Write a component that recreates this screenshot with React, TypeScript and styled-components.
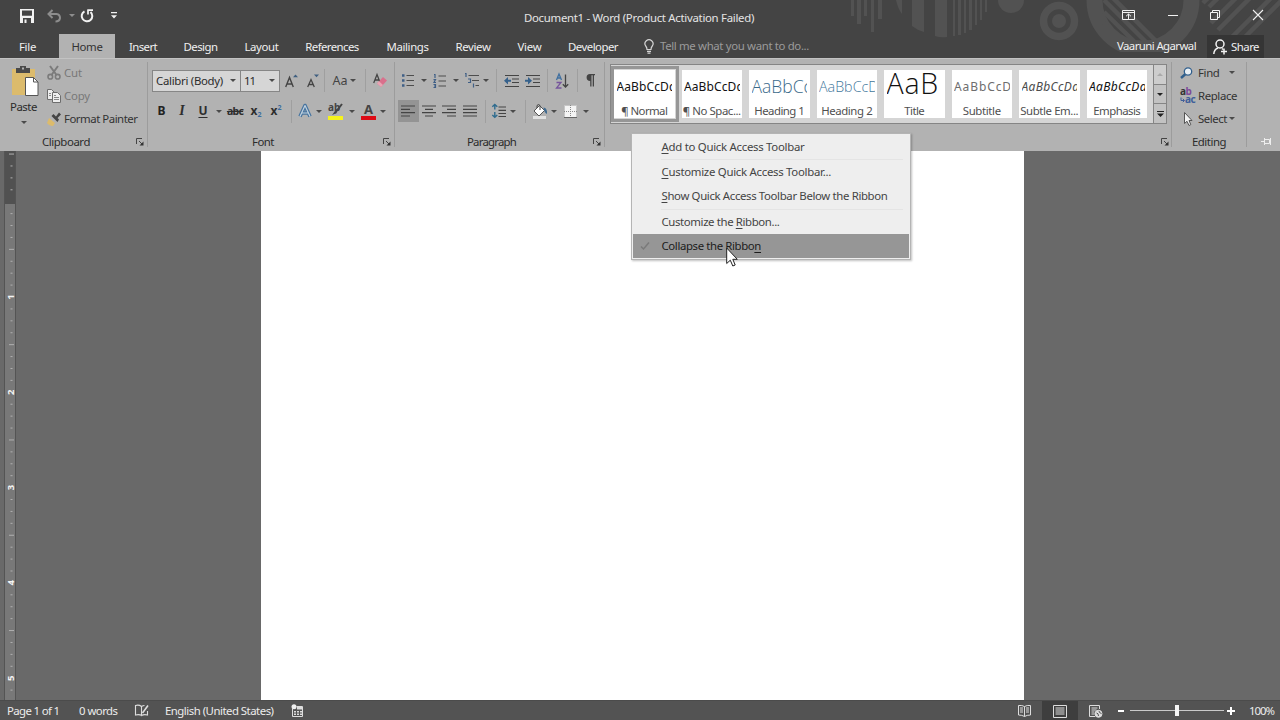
import React, { useLayoutEffect, useRef, useState } from 'react';
import styled, { createGlobalStyle, css } from 'styled-components';

const GlobalStyle = createGlobalStyle`
  * { box-sizing: border-box; }
  body { margin: 0; overflow: hidden; background: #696969; }
  svg { display: block; flex: none; overflow: visible; }
`;

const Window = styled.div`
  width: 1280px;
  height: 720px;
  display: flex;
  flex-direction: column;
  font-family: 'Noto Sans', 'Open Sans', sans-serif;
  font-size: 11.4px;
  line-height: 16px;
  color: #2b2b2b;
  background: #696969;
  cursor: default;
`;

/* ---------- text fitted to a given advance width ---------- */

const FitText = styled.span<{ $w: number }>`
  flex: none;
  width: ${(p) => p.$w}px;
  white-space: nowrap;
`;

function Text({ w, children }: { w: number; children: React.ReactNode }) {
  const inner = useRef<HTMLSpanElement>(null);
  const [spacing, setSpacing] = useState(0);
  useLayoutEffect(() => {
    const el = inner.current;
    if (!el) return;
    const n = (el.textContent || '').length;
    setSpacing((w - el.getBoundingClientRect().width) / n);
  }, [w]);
  return (
    <FitText $w={w}>
      <span ref={inner} style={{ letterSpacing: spacing }}>
        {children}
      </span>
    </FitText>
  );
}

/* ---------- shared pieces ---------- */

const Cell = styled.div<{ $w: number; $start?: boolean }>`
  flex: none;
  width: ${(p) => p.$w}px;
  height: 100%;
  display: flex;
  align-items: center;
  justify-content: ${(p) => (p.$start ? 'flex-start' : 'center')};
`;

const Divider = styled.div`
  flex: none;
  width: 1px;
  height: 23px;
  background: #9f9f9f;
`;

const Caret = styled.i<{ $c?: string }>`
  flex: none;
  width: 0;
  height: 0;
  border: 3px solid transparent;
  border-top-color: ${(p) => p.$c || '#4a4a4a'};
  border-bottom-width: 0;
`;

/* ---------- header ---------- */

const Header = styled.header`
  position: relative;
  flex: none;
  height: 58px;
  background: #444;
  color: #f0f0f0;
`;

const Backdrop = styled.svg`
  position: absolute;
  right: 0;
  top: 0;
`;

const TitleBar = styled.div`
  position: relative;
  display: flex;
  height: 34px;
  padding-top: 1px;
`;

const QuickAccess = styled.div`
  flex: none;
  display: flex;
  width: 524px;
  height: 29px;
  padding-left: 17px;
`;

const Caption = styled.div`
  flex: none;
  height: 33px;
  width: 586px;
  display: flex;
  align-items: center;
  color: #e4e4e4;
`;

const WindowButtons = styled.div`
  display: flex;
  height: 28px;
`;

const TabBar = styled.nav`
  position: relative;
  display: flex;
  height: 24px;
`;

const Tab = styled.div<{ $w: number; $active?: boolean }>`
  flex: none;
  width: ${(p) => p.$w}px;
  display: flex;
  justify-content: center;
  align-items: center;
  padding-top: 1px;
  ${(p) => p.$active && css`background: #b2b2b2; color: #333; margin-left: 4px;`}
`;

const TellMe = styled.div`
  flex: none;
  display: flex;
  align-items: center;
  gap: 6px;
  width: 488px;
  padding-left: 15px;
  color: #9b9b9b;
`;

const ShareButton = styled.div`
  display: flex;
  align-items: center;
  gap: 3px;
  width: 57px;
  height: 23px;
  margin: 1px 0 0 11px;
  padding-left: 6px;
  background: #353535;
`;

const TABS: [string, number, number][] = [
  ['File', 17, 55],
  ['Home', 31, 56],
  ['Insert', 28, 56],
  ['Design', 34, 59],
  ['Layout', 34, 63],
  ['References', 53.5, 78],
  ['Mailings', 42, 73],
  ['Review', 35, 58],
  ['View', 24, 55],
  ['Developer', 50, 72],
];

function HeaderArt() {
  return (
    <Backdrop width="460" height="58" viewBox="820 0 460 58" fill="#525252">
      <clipPath id="art">
        <rect x="820" y="0" width="460" height="52" />
      </clipPath>
      <g clipPath="url(#art)">
        <path d="M851 0h3v16h-3zM857 0h4v24h-4zM864 0h3v16h-3zM871 0h3v32h-3zM878 0h4v19h-4z" />
        <path d="M896 0h6v14q-4-5-6-14z" />
        <path d="M912 0h12v32q-7-2-12-6zM935 0h12v37q-7 1-12-1z" />
        <path d="M953 0h2v36h-2zM958 0h3v35h-3zM964 0h2v33h-2zM969 0h3v30h-3zM975 0h2v25h-2zM980 0h2v20h-2zM985 0h2v12h-2z" />
        <circle cx="1011" cy="0" r="13" />
        <circle cx="1059" cy="21" r="15.5" fill="none" stroke="#525252" strokeWidth="7.5" />
        <circle cx="1059" cy="21" r="7" />
        <circle cx="1143" cy="0" r="48.5" fill="none" stroke="#525252" strokeWidth="16" />
        <g stroke="#525252" strokeWidth="4.5">
          <path d="M1104 23L1132 51M1104 12L1143 50M1104 0L1152 48M1113-2L1159 44" />
          <path d="M1208-2L1203 3M1220-4L1209 7M1238-4L1211 23M1252-4L1218 30M1273-4L1224 45M1284-2L1233 49" />
        </g>
      </g>
    </Backdrop>
  );
}

const LIGHT = '#f2f2f2';

function AppHeader() {
  return (
    <Header>
      <HeaderArt />
      <TitleBar>
        <QuickAccess>
          <Cell $w={20}>
            <svg width="14" height="14" viewBox="0 0 14 14" fill={LIGHT} fillRule="evenodd">
              <path d="M0 0h14v14H0zM2 1.500v5.200h10V1.500zM3 9v5h8V9z" />
              <path d="M4.500 10.500h2v3.500h-2z" />
            </svg>
          </Cell>
          <Cell $w={35}>
            <svg width="15" height="14" viewBox="0 0 15 14" fill="none" stroke="#8d8d8d" strokeWidth="2">
              <path d="M5.500 1L1.500 5L5.500 9M2 5H9.500Q13 5.500 13 9Q12.500 12.500 8.500 12.500" />
            </svg>
          </Cell>
          <Cell $w={0}>
            <Caret $c="#8d8d8d" />
          </Cell>
          <Cell $w={30}>
            <svg width="14" height="14" viewBox="0 0 14 14" fill="none" stroke={LIGHT} strokeWidth="2">
              <path d="M10.500 3A5.300 5.300 0 1 1 4.500 2.300" />
              <path d="M8 0.500V5.500M7.500 1.200H13" strokeWidth="1.700" />
            </svg>
          </Cell>
          <Cell $w={24}>
            <svg width="6" height="7" viewBox="0 0 6 7" fill={LIGHT}>
              <path d="M0 0h6v1.300H0zM0 3.200h6L3 6.500z" />
            </svg>
          </Cell>
        </QuickAccess>
        <Caption>
          <Text w={230}>Document1 - Word (Product Activation Failed)</Text>
        </Caption>
        <WindowButtons>
          <Cell $w={37}>
            <svg width="13" height="10" viewBox="0 0 13 10" fill="none" stroke={LIGHT}>
              <path d="M.5.5h12v9H.5zM.5 2.500h12M6.500 9V4M4 6.300L6.500 4L9 6.300" />
            </svg>
          </Cell>
          <Cell $w={52}>
            <svg width="10" height="1" viewBox="0 0 10 1" fill={LIGHT}>
              <path d="M0 0h10v1H0z" />
            </svg>
          </Cell>
          <Cell $w={32}>
            <svg width="10" height="10" viewBox="0 0 10 10" fill="none" stroke={LIGHT}>
              <path d="M.5 2.500h7v7h-7zM2.500 2.500V.5h7v7h-2" />
            </svg>
          </Cell>
          <Cell $w={5} />
          <Cell $w={44}>
            <svg width="10" height="10" viewBox="0 0 10 10" stroke={LIGHT} strokeWidth="1.100">
              <path d="M0 0L10 10M10 0L0 10" />
            </svg>
          </Cell>
        </WindowButtons>
      </TitleBar>
      <TabBar>
        {TABS.map(([name, w, cell]) => (
          <Tab key={name} $w={cell} $active={name === 'Home'}>
            <Text w={w}>{name}</Text>
          </Tab>
        ))}
        <TellMe>
          <svg width="10" height="15" viewBox="0 0 10 15" fill="none" stroke="#d5d5d5" strokeWidth="1.200">
            <path d="M3 10.500Q3 8.500 1.700 7A4 4 0 1 1 8.300 7Q7 8.500 7 10.500zM3 12.300h4M3.500 14.200h3" />
          </svg>
          <Text w={149}>Tell me what you want to do...</Text>
        </TellMe>
        <Cell $w={79}>
          <Text w={79}>Vaaruni Agarwal</Text>
        </Cell>
        <ShareButton>
          <svg width="15" height="16" viewBox="0 0 15 16" fill="none" stroke={LIGHT} strokeWidth="1.500">
            <circle cx="7" cy="5" r="4" />
            <path d="M.8 15Q1 10.500 5 9M9 9.500L10 10.500M11 9.500v6M8 12.500h6" />
          </svg>
          <Text w={28}>Share</Text>
        </ShareButton>
      </TabBar>
    </Header>
  );
}

/* ---------- ribbon ---------- */

const Ribbon = styled.section`
  flex: none;
  display: flex;
  height: 93px;
  background: #b2b2b2;
  border-top: 1px solid #c3c3c3;
`;

const Group = styled.div<{ $w: number }>`
  flex: none;
  display: flex;
  flex-direction: column;
  width: ${(p) => p.$w}px;
  height: 92px;
  padding-top: 3px;
  background: linear-gradient(#9c9c9c, #9c9c9c) right 3px / 1px 85px no-repeat;
`;

const GroupBody = styled.div`
  display: flex;
  height: 71px;
`;

const GroupFooter = styled.div`
  display: flex;
  height: 18px;
`;

const Tools = styled.div`
  display: flex;
  flex-direction: column;
`;

const ToolRow = styled.div<{ $h: number; $pad: number }>`
  display: flex;
  align-items: center;
  height: ${(p) => p.$h}px;
  padding-left: ${(p) => p.$pad}px;
`;

const Launcher = () => (
  <svg width="8" height="8" viewBox="0 0 8 8" fill="none" stroke="#444">
    <path d="M.5 6V.5H6M3 3L6.500 6.500" />
    <path d="M7.500 3.500v4h-4z" fill="#333" stroke="none" />
  </svg>
);

const PasteButton = styled.div`
  display: flex;
  flex-direction: column;
  align-items: center;
  width: 47px;
  height: 71px;
  padding-top: 4px;
`;

const PasteLabel = styled.div`
  height: 16px;
  margin: 3px 0 6px;
`;

const Command = styled.div<{ $muted?: boolean; $icon: number }>`
  display: flex;
  align-items: center;
  height: 23px;
  color: ${(p) => (p.$muted ? '#787878' : '#333')};
  svg { margin-right: ${(p) => 17 - p.$icon}px; }
`;

const CommandList = styled.div`
  display: flex;
  flex-direction: column;
  margin-top: -1px;
`;

function ClipboardGroup() {
  return (
    <Group $w={148}>
      <GroupBody>
        <PasteButton>
          <svg width="28" height="30" viewBox="-1 0 28 30">
            <rect x="1" y="3" width="23" height="26" fill="#dcbb6c" />
            <path d="M5 2h4V0h6v2h4v5H5z" fill="#4a4a4a" />
            <rect x="11" y="1.500" width="2" height="2" fill="#b2b2b2" />
            <path d="M14.500 11.500h8l4.500 4.500v13.500H14.500z" fill="#fff" stroke="#555" />
            <path d="M22.500 11.500V16H27" fill="none" stroke="#555" />
          </svg>
          <PasteLabel>
            <Text w={27}>Paste</Text>
          </PasteLabel>
          <Caret />
        </PasteButton>
        <CommandList>
          <Command $muted $icon={14}>
            <svg width="14" height="15" viewBox="0 0 14 15" fill="none" stroke="#7b7b7b" strokeWidth="1.600">
              <path d="M3 1L9.500 10M11 1L4.500 10" strokeWidth="2" />
              <circle cx="3.300" cy="11.700" r="2.300" />
              <circle cx="10.700" cy="11.700" r="2.300" />
            </svg>
            <Text w={18}>Cut</Text>
          </Command>
          <Command $muted $icon={14}>
            <svg width="14" height="14" viewBox="0 0 14 14" fill="#eee" stroke="#6d6d6d">
              <path d="M.5.5h4l3 3v7h-7z" />
              <path d="M5.500 3.500h5l3 3v7h-8z" />
              <path d="M7 8.500h5M7 10.500h5M7 6.500h2M2 4.500h2M2 6.500h2" stroke="#888" />
            </svg>
            <Text w={26}>Copy</Text>
          </Command>
          <Command $icon={14}>
            <svg width="14" height="14" viewBox="0 0 14 14">
              <path d="M2 6l6 5l-2 3q-4 0-6-3z" fill="#dcbb6c" />
              <path d="M4.500 4L10.500 10L12 7.500L10.500 6L14 2.500L12 .5L9 4.500L6.500 2z" fill="#444" />
            </svg>
            <Text w={73.5}>Format Painter</Text>
          </Command>
        </CommandList>
      </GroupBody>
      <GroupFooter>
        <Cell $w={132}>
          <Text w={48}>Clipboard</Text>
        </Cell>
        <Cell $w={15}>
          <Launcher />
        </Cell>
      </GroupFooter>
    </Group>
  );
}

const Combo = styled.div<{ $w: number }>`
  flex: none;
  display: flex;
  align-items: center;
  justify-content: space-between;
  width: ${(p) => p.$w}px;
  height: 22px;
  margin-right: -1px;
  padding: 0 4px 0 3px;
  border: 1px solid #868686;
  background: #d6d6d6;
`;

const Glyph = styled.span<{ $size?: number; $bold?: boolean; $italic?: boolean; $deco?: string; $c?: string; $ls?: number }>`
  font-size: ${(p) => p.$size || 12}px;
  font-weight: ${(p) => (p.$bold ? 700 : 400)};
  font-style: ${(p) => (p.$italic ? 'italic' : 'normal')};
  text-decoration: ${(p) => p.$deco || 'none'};
  text-underline-offset: 2px;
  letter-spacing: ${(p) => p.$ls || 0}px;
  color: ${(p) => p.$c || '#2e2e2e'};
  sub, sup { font-size: 7px; line-height: 0; color: #3b6c9e; }
  sub { vertical-align: -2px; }
  sup { vertical-align: 5px; }
`;

const SerifGlyph = styled(Glyph)`
  font-family: 'Liberation Serif', serif;
`;

const Swatched = styled.div<{ $bar: string }>`
  display: flex;
  justify-content: center;
  width: 15px;
  height: 17px;
  line-height: 13px;
  border-bottom: 4px solid ${(p) => p.$bar};
`;

function FontGroup() {
  return (
    <Group $w={247}>
      <GroupBody>
        <Tools>
          <ToolRow $h={37} $pad={4}>
            <Combo $w={89}>
              <Text w={67}>Calibri (Body)</Text>
              <Caret />
            </Combo>
            <Combo $w={40}>
              <Text w={11}>11</Text>
              <Caret />
            </Combo>
            <Cell $w={25}>
              <svg width="13" height="14" viewBox="0 0 13 14" fill="none" stroke="#444" strokeWidth="1.400">
                <path d="M.7 13L4.500 3.500L8.300 13M2 10h5" />
                <path d="M8 3.200L10.500.5L13 3.200z" fill="#3f5f80" stroke="none" />
              </svg>
            </Cell>
            <Cell $w={18}>
              <svg width="12" height="14" viewBox="0 0 12 14" fill="none" stroke="#444" strokeWidth="1.300">
                <path d="M.7 13L4 5.500L7.300 13M1.800 10.500h4.500" />
                <path d="M7 .5L9.500 3.200L12 .5z" fill="#3f5f80" stroke="none" />
              </svg>
            </Cell>
            <Cell $w={5}>
              <Divider />
            </Cell>
            <Cell $w={26}>
              <Glyph $size={12.5} $c="#444">Aa</Glyph>
            </Cell>
            <Cell $w={0}>
              <Caret />
            </Cell>
            <Cell $w={24}>
              <Divider />
            </Cell>
            <Cell $w={6}>
              <svg width="14" height="15" viewBox="0 0 14 15">
                <path d="M.7 10L4 1.500L7.300 10M2 7h4" fill="none" stroke="#444" strokeWidth="1.300" />
                <path d="M4 10.500L10 4L14 7.500L8 14z" fill="#d9708c" />
                <path d="M4 10.500L6 8.200L10 12L8 14z" fill="#e8a5b4" />
              </svg>
            </Cell>
          </ToolRow>
          <ToolRow $h={24} $pad={3}>
            <Cell $w={21}>
              <Glyph $bold $c="#222">B</Glyph>
            </Cell>
            <Cell $w={20}>
              <SerifGlyph $size={14} $bold $italic>I</SerifGlyph>
            </Cell>
            <Cell $w={22}>
              <Glyph $bold $deco="underline">U</Glyph>
            </Cell>
            <Cell $w={9}>
              <Caret />
            </Cell>
            <Cell $w={24}>
              <Glyph $size={10.5} $deco="line-through" $ls={-0.7} $bold>abc</Glyph>
            </Cell>
            <Cell $w={18}>
              <Glyph $bold>x<sub>2</sub></Glyph>
            </Cell>
            <Cell $w={22}>
              <Glyph $bold>x<sup>2</sup></Glyph>
            </Cell>
            <Cell $w={8}>
              <Divider />
            </Cell>
            <Cell $w={20}>
              <svg width="14" height="14" viewBox="0 0 14 14" fill="none" strokeLinejoin="round">
                <path d="M2 12.500L7 1.500L12 12.500M4 9h6" stroke="#47749f" strokeWidth="3.600" />
                <path d="M2 12.500L7 1.500L12 12.500M4 9h6" stroke="#c2d2df" strokeWidth="1.200" />
              </svg>
            </Cell>
            <Cell $w={8}>
              <Caret />
            </Cell>
            <Cell $w={25}>
              <Swatched $bar="#f6f31c">
                <svg width="15" height="13" viewBox="0 0 15 13">
                  <path d="M7 10L14 1" stroke="#444" strokeWidth="2" />
                  <path d="M4 12l3-4l2 2z" fill="#444" />
                  <text x="0" y="8" fontSize="10" fontWeight="700" fill="#444">ab</text>
                </svg>
              </Swatched>
            </Cell>
            <Cell $w={8}>
              <Caret />
            </Cell>
            <Cell $w={25}>
              <Swatched $bar="#de0b16">
                <Glyph $size={13} $bold $c="#444">A</Glyph>
              </Swatched>
            </Cell>
            <Cell $w={4}>
              <Caret />
            </Cell>
          </ToolRow>
        </Tools>
      </GroupBody>
      <GroupFooter>
        <Cell $w={230}>
          <Text w={22}>Font</Text>
        </Cell>
        <Cell $w={17}>
          <Launcher />
        </Cell>
      </GroupFooter>
    </Group>
  );
}

const AlignButton = styled.div<{ $on?: boolean }>`
  flex: none;
  display: flex;
  justify-content: center;
  align-items: center;
  width: 20.500px;
  height: 22px;
  background: ${(p) => (p.$on ? '#949494' : 'transparent')};
`;

const Lines = ({ d }: { d: string }) => (
  <svg width="14" height="12" viewBox="0 0 14 12" fill="none" stroke="#444" strokeWidth="1.200">
    <path d={d} />
  </svg>
);

const DOT = '#3f5f86';

function ParagraphGroup() {
  return (
    <Group $w={210}>
      <GroupBody>
        <Tools>
          <ToolRow $h={37} $pad={4}>
            <Cell $w={18}>
              <svg width="14" height="15" viewBox="0 0 14 15" stroke="#4d4d4d" strokeWidth="1.200">
                <path d="M5.500 2.500H13M5.500 7.500H13M5.500 12.500H13" />
                <path d="M1 2.500h2.500M1 7.500h2.500M1 12.500h2.500" stroke={DOT} strokeWidth="2.500" />
              </svg>
            </Cell>
            <Cell $w={14}>
              <Caret />
            </Cell>
            <Cell $w={18}>
              <svg width="14" height="16" viewBox="0 0 14 16" stroke="#4d4d4d" strokeWidth="1.200">
                <path d="M5.500 3H13M5.500 8H13M5.500 13H13" />
                <path d="M1 1.500h1v3.500M.5 6.700h2L1 9.500h2M.5 11.500h2v3h-2M1 13h1" stroke={DOT} fill="none" />
              </svg>
            </Cell>
            <Cell $w={14}>
              <Caret />
            </Cell>
            <Cell $w={18}>
              <svg width="16" height="15" viewBox="0 0 16 15" stroke="#4d4d4d" strokeWidth="1.200">
                <path d="M4.500 2.500H15M8 7.500H15M11.500 12.500H15" />
                <path d="M1 .5h1v3.500M4 6h2.500v3.500h-2.500M9.500 10.500v4" stroke={DOT} fill="none" />
              </svg>
            </Cell>
            <Cell $w={10}>
              <Caret />
            </Cell>
            <Cell $w={11}>
              <Divider />
            </Cell>
            <Cell $w={19}>
              <svg width="15" height="14" viewBox="0 0 15 14" stroke="#444" strokeWidth="1.200">
                <path d="M1 1.500h14M8 5h7M8 8.500h7M1 12.500h14" />
                <path d="M0 6.800L4 3v2.800h3v2H4v2.800z" fill="#35618c" stroke="none" />
              </svg>
            </Cell>
            <Cell $w={22}>
              <svg width="15" height="14" viewBox="0 0 15 14" stroke="#444" strokeWidth="1.200">
                <path d="M1 1.500h14M8 5h7M8 8.500h7M1 12.500h14" />
                <path d="M7 6.800L3 3v2.800H0v2h3v2.800z" fill="#35618c" stroke="none" />
              </svg>
            </Cell>
            <Cell $w={9}>
              <Divider />
            </Cell>
            <Cell $w={21}>
              <svg width="13" height="16" viewBox="0 0 13 16" fill="none" strokeWidth="1.300">
                <path d="M.5 7L3 1L5.500 7M1.500 5h3" stroke="#3f6fa0" />
                <path d="M.5 9.500H5L.5 15H5.500" stroke="#76559c" />
                <path d="M9.500 1.500V14M6.800 11.300L9.500 14L12.200 11.300" stroke="#444" />
              </svg>
            </Cell>
            <Cell $w={8}>
              <Divider />
            </Cell>
            <Cell $w={19}>
              <svg width="9" height="13" viewBox="0 0 9 13">
                <path d="M9 0v1.200H8V12.500H6.700V1.200H5.500V12.500H4.200V7A3.500 3.500 0 0 1 4 0z" fill="#444" />
              </svg>
            </Cell>
          </ToolRow>
          <ToolRow $h={24} $pad={3}>
            <AlignButton $on><Lines d="M0 1h14M0 4.300h9M0 7.600h14M0 11h9" /></AlignButton>
            <AlignButton><Lines d="M0 1h14M3 4.300h8M0 7.600h14M3 11h8" /></AlignButton>
            <AlignButton><Lines d="M0 1h14M5 4.300h9M0 7.600h14M5 11h9" /></AlignButton>
            <AlignButton><Lines d="M0 1h14M0 4.300h14M0 7.600h14M0 11h14" /></AlignButton>
            <Cell $w={10}>
              <Divider />
            </Cell>
            <Cell $w={18}>
              <svg width="14" height="14" viewBox="0 0 14 14" fill="none" stroke="#444" strokeWidth="1.200">
                <path d="M6.500 3H14M6.500 6.300H14M6.500 9.500H14M6.500 12.500H14" />
                <path d="M2.800 0V5.500M.3 2.800L2.800.5L5.300 2.800M2.800 8V13.500M.3 11L2.800 13.300L5.300 11" stroke="#2f6c8f" strokeWidth="1.400" />
              </svg>
            </Cell>
            <Cell $w={10}>
              <Caret />
            </Cell>
            <Cell $w={14}>
              <Divider />
            </Cell>
            <Cell $w={16}>
              <svg width="15" height="15" viewBox="0 0 15 15">
                <path d="M1 7L6.500 1.500L11.500 6.500L6 12z" fill="#fff" stroke="#555" />
                <path d="M4 4V1.500Q5.500-.5 7 1.500V6" fill="none" stroke="#444" />
                <path d="M10.500 3.500q4 .5 3.500 6.500q-2-1-3-3.500z" fill="#3f6a90" />
                <path d="M0 12h13v3H0z" fill="#e2e2e2" />
              </svg>
            </Cell>
            <Cell $w={12}>
              <Caret />
            </Cell>
            <Cell $w={20}>
              <svg width="13" height="13" viewBox="0 0 13 13">
                <path d="M0 0h13v13H0z" fill="#f4f4f4" />
                <path d="M.5.5h12v12H.5z" fill="none" stroke="#999" strokeDasharray="1 1" />
                <path d="M6.500 0v13M0 6.500h13" stroke="#888" strokeDasharray="1 1" />
                <path d="M0 12.500h13" stroke="#666" />
              </svg>
            </Cell>
            <Cell $w={12}>
              <Caret />
            </Cell>
          </ToolRow>
        </Tools>
      </GroupBody>
      <GroupFooter>
        <Cell $w={193}>
          <Text w={49}>Paragraph</Text>
        </Cell>
        <Cell $w={17}>
          <Launcher />
        </Cell>
      </GroupFooter>
    </Group>
  );
}

const Gallery = styled.div`
  display: flex;
  width: 557px;
  height: 60px;
  margin: 2px 0 0 5px;
  border: 1px solid #858585;
  background: #d5d5d5;
`;

const StyleSlot = styled.div<{ $on?: boolean }>`
  flex: none;
  width: 67.500px;
  height: 56px;
  margin-top: 1px;
  border: ${(p) => (p.$on ? '3px solid #969696' : '0')};
  padding: ${(p) => (p.$on ? '1px 0 0 0' : '4px 3px 0')};
`;

const Tile = styled.div`
  width: 60.500px;
  height: 48px;
  padding: 2px 2.500px 0;
  background: #fff;
`;

const Preview = styled.div<{ $size: number; $c: string; $italic?: boolean; $light?: boolean; $ls?: number; $lh?: number }>`
  height: 31px;
  line-height: ${(p) => p.$lh || 29}px;
  overflow: hidden;
  white-space: nowrap;
  font-family: ${(p) => (p.$light ? "'Open Sans'" : "'Noto Sans'")}, sans-serif;
  font-weight: ${(p) => (p.$light ? 300 : 400)};
  font-size: ${(p) => p.$size}px;
  font-style: ${(p) => (p.$italic ? 'italic' : 'normal')};
  letter-spacing: ${(p) => p.$ls || 0}px;
  color: ${(p) => p.$c};
`;

const TileName = styled.div`
  display: flex;
  justify-content: center;
  height: 15px;
  line-height: 16px;
  color: #4f4f4f;
`;

const GalleryScroll = styled.div`
  display: flex;
  flex-direction: column;
  width: 14px;
  height: 60px;
  margin: -1px -1px 0 auto;
  border: 1px solid #858585;
`;

const ScrollButton = styled.div<{ $off?: boolean }>`
  flex: 1;
  display: flex;
  align-items: center;
  justify-content: center;
  background: ${(p) => (p.$off ? '#cdcdcd' : '#c2c2c2')};
  & + & { border-top: 1px solid #858585; }
`;

const STYLES = [
  { name: '¶ Normal', w: 46, text: 'AaBbCcDd', size: 12, c: '#111', ls: 0.1 },
  { name: '¶ No Spac...', w: 58, text: 'AaBbCcDd', size: 12, c: '#111', ls: 0.1 },
  { name: 'Heading 1', w: 50, text: 'AaBbCc', size: 17.5, c: '#3a6a8a', light: true },
  { name: 'Heading 2', w: 51, text: 'AaBbCcD', size: 14.3, c: '#3f789c', light: true },
  { name: 'Title', w: 20, text: 'AaB', size: 28.5, c: '#111', light: true, ls: 0.8, lh: 22 },
  { name: 'Subtitle', w: 38, text: 'AaBbCcD', size: 12, c: '#6d6d6d', ls: 0.9 },
  { name: 'Subtle Em...', w: 58, text: 'AaBbCcDd', size: 12, c: '#4c4c4c', italic: true, ls: 0.35 },
  { name: 'Emphasis', w: 47, text: 'AaBbCcDd', size: 12, c: '#111', italic: true, ls: 0.35 },
];

function StylesGroup() {
  return (
    <Group $w={567}>
      <GroupBody>
        <Gallery>
          {STYLES.map((s, i) => (
            <StyleSlot key={s.name} $on={i === 0}>
              <Tile>
                <Preview $size={s.size} $c={s.c} $italic={s.italic} $light={s.light} $ls={s.ls} $lh={s.lh}>
                  {s.text}
                </Preview>
                <TileName>
                  <Text w={s.w}>{s.name}</Text>
                </TileName>
              </Tile>
            </StyleSlot>
          ))}
          <GalleryScroll>
            <ScrollButton $off>
              <svg width="6" height="3" viewBox="0 0 6 3" fill="#aaa"><path d="M0 3L3 0L6 3z" /></svg>
            </ScrollButton>
            <ScrollButton><Caret $c="#222" /></ScrollButton>
            <ScrollButton>
              <svg width="7" height="6" viewBox="0 0 7 6" fill="#222"><path d="M0 0h7v1H0zM0 2.500h7L3.500 6z" /></svg>
            </ScrollButton>
          </GalleryScroll>
        </Gallery>
      </GroupBody>
      <GroupFooter>
        <Cell $w={552} />
        <Cell $w={15}>
          <Launcher />
        </Cell>
      </GroupFooter>
    </Group>
  );
}

const EditingList = styled(CommandList)`
  padding-left: 8px;
  svg + span { margin-left: 1px; }
  i { margin-left: 2px; }
`;

const SpacedCaret = styled.div`
  padding-left: 7px;
`;

function EditingGroup() {
  return (
    <Group $w={75}>
      <GroupBody>
        <EditingList>
          <Command $icon={13}>
            <svg width="13" height="12" viewBox="0 0 13 12">
              <path d="M1 11L5.500 7" stroke="#315f8c" strokeWidth="2.500" />
              <circle cx="8" cy="4.500" r="3.700" fill="#e9eff4" stroke="#315f8c" strokeWidth="1.300" />
            </svg>
            <Text w={21.5}>Find</Text>
            <SpacedCaret>
              <Cell $w={8}><Caret /></Cell>
            </SpacedCaret>
          </Command>
          <Command $icon={16}>
            <svg width="16" height="16" viewBox="0 0 16 16" fontSize="10" fontWeight="700" letterSpacing="-.5">
              <text x="0" y="7" fill="#333">a<tspan fill="#7d4b9a">b</tspan></text>
              <text x="5" y="15" fill="#3f5f9a">ac</text>
              <path d="M1 9.500v3h3M2.800 10.800L4.500 12.500L2.800 14.200" fill="none" stroke="#3f5f9a" />
            </svg>
            <Text w={39}>Replace</Text>
          </Command>
          <Command $icon={13}>
            <svg width="13" height="14" viewBox="0 0 13 14">
              <path d="M4.500.5V11.500L7 9.300L9 13.500L10.800 12.600L9 8.500H12z" fill="#f4f4f4" stroke="#555" />
            </svg>
            <Text w={29}>Select</Text>
            <Caret />
          </Command>
        </EditingList>
      </GroupBody>
      <GroupFooter>
        <Cell $w={74}>
          <Text w={34}>Editing</Text>
        </Cell>
      </GroupFooter>
    </Group>
  );
}

const RibbonEnd = styled.div`
  flex: 1;
  display: flex;
  align-items: flex-end;
  justify-content: flex-end;
  padding: 0 9px 6px 0;
`;

/* ---------- document ---------- */

const Workspace = styled.main`
  flex: none;
  display: flex;
  height: 549px;
  padding-left: 4px;
  background: #696969;
`;

const Page = styled.article`
  width: 763px;
  height: 549px;
  margin-left: 245px;
  background: #fff;
`;

const INCH = 95.3;
const ZERO = 50.7;

function VerticalRuler() {
  const eighths = Array.from({ length: 46 }, (_, i) => i - 4);
  return (
    <svg width="12" height="549" viewBox="0 0 12 549">
      <rect width="12" height="549" fill="#787878" />
      <rect width="12" height="53" fill="#515151" />
      <path d="M.5 0V549M11.500 0V549" stroke="#545454" />
      {eighths.map((n) => {
        const y = ZERO + (n * INCH) / 8;
        if (n % 8 === 0) {
          return n > 0 ? (
            <text key={n} x="0" y="0" transform={`translate(10 ${y}) rotate(-90)`} textAnchor="middle" fontSize="9.500" fontWeight="700" fill="#f4f4f4">
              {n / 8}
            </text>
          ) : null;
        }
        if (y > 545) return null;
        const half = n % 4 === 0;
        return <rect key={n} x={half ? 5 : 6.5} y={y - 0.5} width={half ? 5 : 2} height="1" fill="#b0b0b0" />;
      })}
    </svg>
  );
}

/* ---------- context menu ---------- */

const Menu = styled.div`
  position: absolute;
  left: 631px;
  top: 133px;
  width: 280px;
  height: 127px;
  padding: 1px 1px 1px;
  background: #eee;
  border: 1px solid #b4b4b4;
  box-shadow: 1px 1px 2px rgba(0, 0, 0, 0.25);
  color: #444;
`;

const MenuItem = styled.div<{ $on?: boolean }>`
  display: flex;
  align-items: center;
  height: 24px;
  padding-bottom: 1px;
  padding-left: ${(p) => (p.$on ? 7 : 28.5)}px;
  background: ${(p) => (p.$on ? '#969696' : 'transparent')};
  color: ${(p) => (p.$on ? '#1c1c1c' : '#444')};
  svg { margin-right: 11.500px; }
  u { text-underline-offset: 2px; }
`;

const MenuRule = styled.div`
  height: 1px;
  margin: 0 6px 0.500px 28px;
  background: #e4e4e4;
`;

const Pointer = styled.svg`
  position: absolute;
  left: 726px;
  top: 247px;
`;

/* ---------- status bar ---------- */

const StatusBar = styled.footer`
  flex: none;
  display: flex;
  height: 20px;
  background: #535353;
  border-top: 1px solid #4b4b4b;
  color: #ececec;
`;

const StatusLeft = styled.div`
  flex: none;
  display: flex;
  width: 1006px;
  padding-left: 7px;
`;

const ViewButton = styled.div<{ $on?: boolean }>`
  flex: none;
  display: flex;
  align-items: center;
  justify-content: center;
  width: 36px;
  height: 20px;
  background: ${(p) => (p.$on ? '#3e3e3e' : 'transparent')};
`;

const Track = styled.div`
  flex: none;
  display: flex;
  align-items: center;
  justify-content: center;
  width: 94px;
  height: 19px;
  margin: 0 3px;
  background: linear-gradient(#c9c9c9, #c9c9c9) 0 9px / 94px 1px no-repeat;
`;

const Thumb = styled.div`
  width: 4px;
  height: 11px;
  background: #f5f5f5;
`;

function Status() {
  return (
    <StatusBar>
      <StatusLeft>
        <Cell $w={72} $start><Text w={52.5}>Page 1 of 1</Text></Cell>
        <Cell $w={56} $start><Text w={38.5}>0 words</Text></Cell>
        <Cell $w={30} $start>
          <svg width="14" height="13" viewBox="0 0 14 13" fill="none" stroke="#ddd" strokeWidth="1.100">
            <path d="M7 11.500Q4 10 .5 11V1.500Q4 .5 6.500 2.500V11.500Q9 10 12.500 11V7M6.500 2.500Q8 1.500 9.500 1.500" />
            <path d="M7.500 9L13 1.500" strokeWidth="1.600" />
          </svg>
        </Cell>
        <Cell $w={126} $start><Text w={108.5}>English (United States)</Text></Cell>
        <Cell $w={16} $start>
          <svg width="13" height="13" viewBox="0 0 13 13">
            <path d="M1.500 4.500v8h10v-10h-6" fill="none" stroke="#ddd" />
            <circle cx="3" cy="2.700" r="2.500" fill="#eee" />
            <path d="M6 3h5v2.500H6zM3 7h2v1.500H3zM6 7h2v1.500H6zM9 7h2v1.500H9zM3 9.500h2V11H3zM6 9.500h2V11H6zM9 9.500h2V11H9z" fill="#ddd" />
          </svg>
        </Cell>
      </StatusLeft>
      <ViewButton>
        <svg width="13" height="12" viewBox="0 0 13 12" fill="none" stroke="#ddd">
          <path d="M6.500 1.500Q4 0 .5.500V10Q4 10 6.500 11.500Q9 10 12.500 10V.5Q9 0 6.500 1.500V11.500M2 3h3M2 5h3M2 7h3M8 3h3M8 5h3M8 7h3" />
        </svg>
      </ViewButton>
      <ViewButton $on>
        <svg width="14" height="13" viewBox="0 0 14 13" fill="none" stroke="#ddd">
          <path d="M.5.500h13v12H.5zM2.500 3h9M2.500 5h9M2.500 7h9M2.500 9h9" />
        </svg>
      </ViewButton>
      <ViewButton>
        <svg width="14" height="13" viewBox="0 0 14 13" fill="none" stroke="#ddd">
          <path d="M6 11.500H.5V.5h10V4M2.500 3h6M2.500 5h5M2.500 7h3M2.500 9h3" />
          <circle cx="9.500" cy="8.800" r="3.500" fill="#ddd" />
          <path d="M7.500 8q2 0 2 3M10 6q0 2 2.500 2.500" stroke="#555" />
        </svg>
      </ViewButton>
      <Cell $w={13}>
        <svg width="6" height="2" viewBox="0 0 6 2" fill="#fff"><path d="M0 0h6v2H0z" /></svg>
      </Cell>
      <Track><Thumb /></Track>
      <Cell $w={8}>
        <svg width="8" height="8" viewBox="0 0 8 8" fill="#fff"><path d="M3 0h2v3h3v2H5v3H3V5H0V3h3z" /></svg>
      </Cell>
      <Cell $w={14} />
      <Cell $w={26} $start><Text w={25}>100%</Text></Cell>
    </StatusBar>
  );
}

export default function App() {
  return (
    <Window>
      <GlobalStyle />
      <AppHeader />
      <Ribbon>
        <ClipboardGroup />
        <FontGroup />
        <ParagraphGroup />
        <StylesGroup />
        <EditingGroup />
        <RibbonEnd>
          <svg width="10" height="7" viewBox="0 0 10 7" fill="none" stroke="#eee">
            <path d="M0 3.500h3M3.500 0v7M3.500 1.500h5v4h-5M9.500 0v7" />
          </svg>
        </RibbonEnd>
      </Ribbon>
      <Workspace>
        <VerticalRuler />
        <Page />
      </Workspace>
      <Status />
      <Menu>
        <MenuItem><Text w={143}><u>A</u>dd to Quick Access Toolbar</Text></MenuItem>
        <MenuRule />
        <MenuItem><Text w={169.5}><u>C</u>ustomize Quick Access Toolbar...</Text></MenuItem>
        <MenuItem><Text w={226}><u>S</u>how Quick Access Toolbar Below the Ribbon</Text></MenuItem>
        <MenuRule />
        <MenuItem><Text w={118}>Customize the <u>R</u>ibbon...</Text></MenuItem>
        <MenuItem $on>
          <svg width="10" height="8" viewBox="0 0 10 8" fill="none" stroke="#7a7a7a" strokeWidth="1.500">
            <path d="M1 4.500L3.500 7L9 .5" />
          </svg>
          <Text w={99.5}>Collapse the Ribbo<u>n</u></Text>
        </MenuItem>
      </Menu>
      <Pointer width="12" height="20" viewBox="0 0 12 20">
        <path d="M.7 1V16.500L4.300 13.200L6.800 19L9.200 18L6.800 12.300H11.300z" fill="#fff" stroke="#222" />
      </Pointer>
    </Window>
  );
}
